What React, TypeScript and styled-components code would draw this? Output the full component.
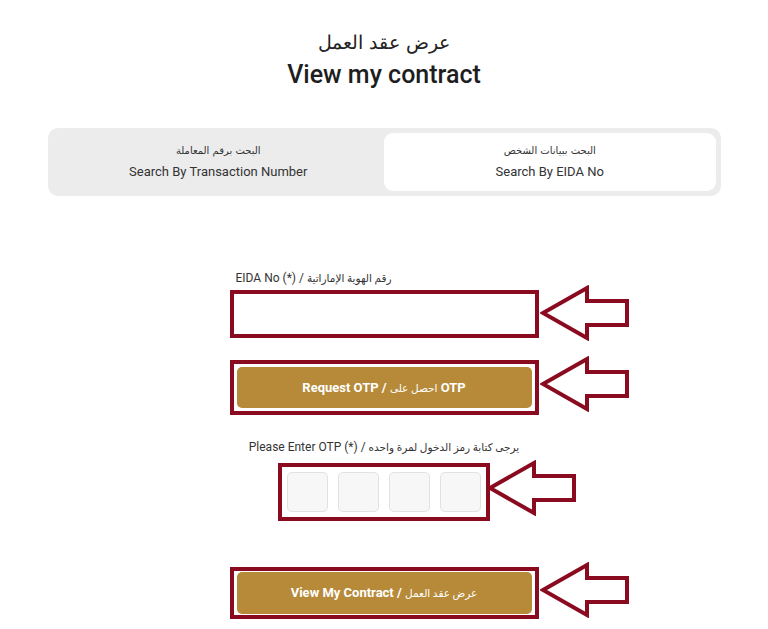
import React, {FC} from 'react';
import styled, {createGlobalStyle} from 'styled-components';

const GlobalStyle = createGlobalStyle`
  body {
    margin: 0;
    background: #ffffff;
    font-family: Roboto, "DejaVu Sans", sans-serif;
    color: #222;
  }
`;

const MAROON = '#8a0b1f';
const GOLD = '#b68a38';

const Page = styled.div`
  display: flex;
  flex-direction: column;
  align-items: center;
  padding-top: 28px;
`;

const ArabicTitle = styled.div`
  font-family: "DejaVu Serif", "Liberation Serif", serif;
  font-size: 19px;
  line-height: 28px;
  color: #222;
  margin-bottom: 4px;
`;

const Title = styled.h1`
  margin: 0;
  font-size: 25px;
  line-height: 30px;
  font-weight: 500;
  color: #1e1e1e;
`;

const Tabs = styled.div`
  margin-top: 38px;
  width: 673px;
  box-sizing: border-box;
  padding: 5px;
  background: #ececec;
  border-radius: 10px;
  display: grid;
  grid-template-columns: 1fr 1fr;
`;

const Tab = styled.div<{active?: boolean}>`
  height: 58px;
  border-radius: 9px;
  background: ${p => (p.active ? '#ffffff' : 'transparent')};
  display: flex;
  flex-direction: column;
  align-items: center;
  justify-content: center;
  gap: 5px;
  color: #333;
`;

const TabArabic = styled.span`
  font-size: 10px;
  line-height: 14px;
  font-family: "DejaVu Sans", sans-serif;
`;

const TabLabel = styled.span`
  font-size: 13px;
  line-height: 18px;
`;

const Form = styled.div`
  margin-top: 74px;
  width: 309px;
  display: flex;
  flex-direction: column;
`;

const Label = styled.div<{centered?: boolean}>`
  font-size: 12px;
  line-height: 16px;
  height: 16px;
  color: #333;
  padding-left: ${p => (p.centered ? '0' : '6px')};
  text-align: ${p => (p.centered ? 'center' : 'left')};
  margin-top: ${p => (p.centered ? '24px' : '0')};
`;

const Arabic = styled.span`
  font-size: 10.5px;
  font-weight: 400;
  line-height: 1;
`;

const Frame = styled.div<{pad: string; mt: number; fit?: boolean}>`
  position: relative;
  border: 4px solid ${MAROON};
  padding: ${p => p.pad};
  margin-top: ${p => p.mt}px;
  background: #fff;
  align-self: ${p => (p.fit ? 'center' : 'stretch')};
`;

const TextInput = styled.input`
  display: block;
  width: 100%;
  height: 40px;
  box-sizing: border-box;
  border: none;
  outline: none;
  background: #fff;
`;

const GoldButton = styled.button<{h: number}>`
  display: block;
  width: 100%;
  height: ${p => p.h}px;
  border: none;
  border-radius: 5px;
  background: ${GOLD};
  color: #fff;
  font-family: Roboto, "DejaVu Sans", sans-serif;
  font-size: 13px;
  line-height: 16px;
  font-weight: 700;
  cursor: pointer;
`;

const OtpRow = styled.div`
  display: flex;
  gap: 10px;
`;

const OtpBox = styled.input`
  width: 41px;
  height: 40px;
  box-sizing: border-box;
  border: 1px solid #e2e2e2;
  border-radius: 5px;
  background: #f7f7f7;
  outline: none;
`;

const ArrowWrap = styled.div<{gap: number; dy: number}>`
  position: absolute;
  left: calc(100% + ${p => p.gap}px);
  top: 50%;
  transform: translateY(calc(-50% + ${p => p.dy}px));
  width: 91px;
  height: 56px;
`;

const Arrow: FC<{gap: number; dy: number}> = ({gap, dy}) => (
  <ArrowWrap gap={gap} dy={dy}>
    <svg width="91" height="56" viewBox="0 0 91 56">
      <polygon
        points="3,28 47,3 47,16 87,16 87,40 47,40 47,53"
        fill="#fff"
        stroke={MAROON}
        strokeWidth="4"
      />
    </svg>
  </ArrowWrap>
);

const App: FC = () => {
  return (
    <Page>
      <GlobalStyle />
      <ArabicTitle>عرض عقد العمل</ArabicTitle>
      <Title>View my contract</Title>

      <Tabs>
        <Tab>
          <TabArabic>البحث برقم المعاملة</TabArabic>
          <TabLabel>Search By Transaction Number</TabLabel>
        </Tab>
        <Tab active>
          <TabArabic>البحث ببيانات الشخص</TabArabic>
          <TabLabel>Search By EIDA No</TabLabel>
        </Tab>
      </Tabs>

      <Form>
        <Label>EIDA No (*) / <Arabic>رقم الهوية الإماراتية</Arabic></Label>
        <Frame pad="0" mt={4}>
          <TextInput />
          <Arrow gap={5} dy={-1} />
        </Frame>

        <Frame pad="3px" mt={22}>
          <GoldButton h={41}>Request OTP / <Arabic>احصل على</Arabic> OTP</GoldButton>
          <Arrow gap={5} dy={-4} />
        </Frame>

        <Label centered>
          Please Enter OTP (*) / <Arabic>يرجى كتابة رمز الدخول لمرة واحده</Arabic>
        </Label>
        <Frame pad="5px 5px" mt={8} fit>
          <OtpRow>
            <OtpBox maxLength={1} />
            <OtpBox maxLength={1} />
            <OtpBox maxLength={1} />
            <OtpBox maxLength={1} />
          </OtpRow>
          <Arrow gap={1} dy={-4} />
        </Frame>

        <Frame pad="1px 3px" mt={46}>
          <GoldButton h={42}>View My Contract / <Arabic>عرض عقد العمل</Arabic></GoldButton>
          <Arrow gap={5} dy={-3} />
        </Frame>
      </Form>
    </Page>
  );
};

export default App;
